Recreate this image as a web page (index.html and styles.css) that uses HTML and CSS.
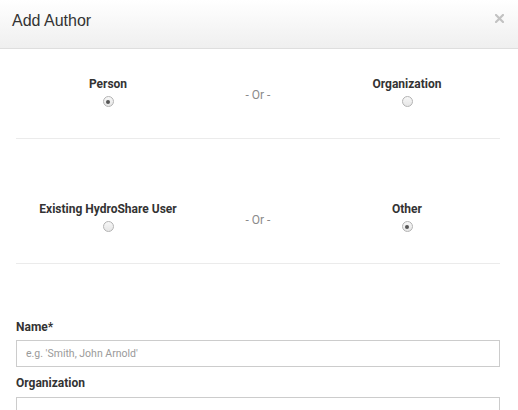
FILE: index.html
```html
<!DOCTYPE html>
<html>
<head>
<meta charset="utf-8">
<link rel="stylesheet" href="styles.css">
</head>
<body>
<div class="modal">
  <div class="modal-header">
    <h4 class="modal-title">Add Author</h4>
    <button class="close" aria-label="Close">
      <svg width="9" height="9" viewBox="0 0 9 9"><path d="M1 1L8 8M8 1L1 8" stroke="#c2c2c2" stroke-width="2.2" stroke-linecap="square"/></svg>
    </button>
  </div>
  <div class="modal-body">
    <div class="choice-row first">
      <label class="opt">
        <span class="opt-label">Person</span>
        <span class="radio checked"></span>
      </label>
      <span class="or">- Or -</span>
      <label class="opt">
        <span class="opt-label">Organization</span>
        <span class="radio"></span>
      </label>
    </div>
    <div class="choice-row second">
      <label class="opt">
        <span class="opt-label">Existing HydroShare User</span>
        <span class="radio"></span>
      </label>
      <span class="or">- Or -</span>
      <label class="opt">
        <span class="opt-label">Other</span>
        <span class="radio checked"></span>
      </label>
    </div>
    <div class="form">
      <label class="field-label">Name*</label>
      <input class="field" type="text" placeholder="e.g. 'Smith, John Arnold'">
      <label class="field-label org">Organization</label>
      <input class="field" type="text">
    </div>
  </div>
</div>
</body>
</html>
```
FILE: styles.css
```css
html, body {
  margin: 0;
  padding: 0;
  background: #fff;
  overflow: hidden;
}
body {
  font-family: Roboto, "Liberation Sans", sans-serif;
  color: #333;
}
.modal {
  width: 518px;
}
.modal-header {
  height: 49px;
  box-sizing: border-box;
  padding: 11px 12px 0 12px;
  background: linear-gradient(to bottom, #ffffff, #efefef);
  border-bottom: 1px solid #dedede;
  display: flex;
  justify-content: space-between;
  align-items: flex-start;
}
.modal-title {
  margin: 0;
  font-family: "Liberation Sans", Arial, sans-serif;
  font-weight: normal;
  font-size: 16px;
  line-height: 20px;
  color: #333;
}
.close {
  border: 0;
  background: none;
  padding: 0;
  margin: 3px 2px 0 0;
  width: 9px;
  height: 9px;
  display: flex;
}
.modal-body {
  padding: 0 18px 0 16px;
}
.choice-row {
  display: grid;
  grid-template-columns: 184px 1fr 186px;
  align-items: start;
  border-bottom: 1px solid #ebebeb;
  padding-bottom: 31px;
}
.choice-row.first {
  padding-top: 28px;
}
.choice-row.second {
  padding-top: 63px;
}
.opt {
  display: flex;
  flex-direction: column;
  align-items: center;
  gap: 5px;
}
.opt-label {
  font-size: 12px;
  line-height: 14px;
  font-weight: bold;
  color: #333;
  white-space: nowrap;
}
.or {
  text-align: center;
  font-size: 12px;
  line-height: 14px;
  color: #8a8a8a;
  margin-top: 11px;
  padding-left: 2px;
}
.radio {
  display: block;
  width: 11px;
  height: 11px;
  box-sizing: border-box;
  border: 1px solid #b3b3b3;
  border-radius: 50%;
  background: linear-gradient(to bottom, #f7f7f7, #e6e6e6);
  position: relative;
}
.radio.checked::after {
  content: "";
  position: absolute;
  left: 2.5px;
  top: 2.5px;
  width: 4px;
  height: 4px;
  border-radius: 50%;
  background: #555;
}
.form {
  display: flex;
  flex-direction: column;
  padding-top: 56px;
}
.field-label {
  font-size: 12px;
  line-height: 14px;
  font-weight: bold;
  color: #333;
  margin-bottom: 6px;
}
.field-label.org {
  margin-top: 9px;
  margin-bottom: 7px;
}
.field {
  display: block;
  box-sizing: border-box;
  width: 100%;
  height: 27px;
  margin: 0;
  border: 1px solid #cccccc;
  border-radius: 0;
  padding: 0 9px;
  font-family: Roboto, sans-serif;
  font-size: 10.5px;
  color: #555;
  background: #fff;
  outline: none;
}
.field::placeholder {
  color: #9a9a9a;
}
```
